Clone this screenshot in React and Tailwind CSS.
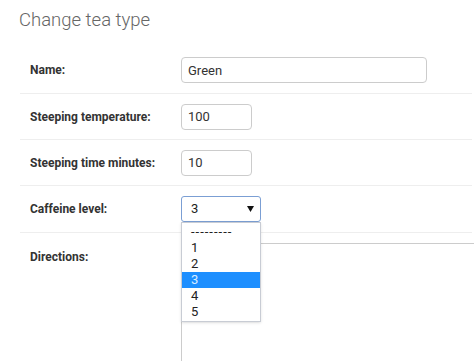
export default function App() {
  const options = ['---------', '1', '2', '3', '4', '5'];

  return (
    <div className="w-[474px] h-[361px] overflow-hidden bg-white font-['Roboto',sans-serif] text-[#333]">
      <h1 className="pl-[19px] pt-[7px] text-[18.5px] font-light leading-[26px] text-[#666]">Change tea type</h1>

      <div className="ml-5 mt-[14px] w-[452px]">
        {/* Name */}
        <div className="flex items-center border-b border-[#eee] pl-[10px] h-[47px]">
          <label className="w-[151px] shrink-0 text-[12px] font-bold text-[#333]">Name:</label>
          <input
            type="text"
            defaultValue="Green"
            className="w-[246px] h-[26px] rounded-[4px] border border-[#ccc] px-[6px] text-[13px] text-[#333] outline-none"
          />
        </div>

        {/* Steeping temperature */}
        <div className="flex items-center border-b border-[#eee] pl-[10px] h-[46px]">
          <label className="w-[151px] shrink-0 text-[12px] font-bold text-[#333]">Steeping temperature:</label>
          <input
            type="text"
            defaultValue="100"
            className="w-[71px] h-[26px] rounded-[4px] border border-[#ccc] px-[6px] text-[13px] text-[#333] outline-none"
          />
        </div>

        {/* Steeping time */}
        <div className="flex items-center border-b border-[#eee] pl-[10px] h-[46px]">
          <label className="w-[151px] shrink-0 text-[12px] font-bold text-[#333]">Steeping time minutes:</label>
          <input
            type="text"
            defaultValue="10"
            className="w-[71px] h-[26px] rounded-[4px] border border-[#ccc] px-[6px] text-[13px] text-[#333] outline-none"
          />
        </div>

        {/* Caffeine level */}
        <div className="relative z-10 flex items-center border-b border-[#eee] pl-[10px] h-[47px]">
          <label className="w-[151px] shrink-0 text-[12px] font-bold text-[#333]">Caffeine level:</label>
          <div className="relative">
            <div className="flex w-[80px] h-[26px] items-center justify-between rounded-[3px] border border-[#7b9fd4] pl-[9px] pr-[6px] text-[13px] text-[#222]">
              <span>3</span>
              <svg width="7" height="6" viewBox="0 0 7 6">
                <path d="M0 0 H7 L3.5 6 Z" fill="#111" />
              </svg>
            </div>
            {/* Open option list */}
            <ul className="absolute left-0 top-[26px] w-[80px] border border-[#c8ccd4] bg-white py-px shadow-sm">
              {options.map((o) => (
                <li
                  key={o}
                  className={`h-4 pl-[9px] text-[13px] leading-4 ${o === '---------' ? 'tracking-[1px]' : ''} ${o === '3' ? 'bg-[#1e8fff] text-[#d8ecff]' : 'text-[#222]'}`}
                >
                  {o}
                </li>
              ))}
            </ul>
          </div>
        </div>

        {/* Directions */}
        <div className="flex items-start pl-[10px] pt-[10px]">
          <label className="w-[151px] shrink-0 pt-[5px] text-[12px] font-bold text-[#333]">Directions:</label>
          <textarea className="w-[600px] h-[200px] shrink-0 rounded-[4px] border border-[#ccc] outline-none" />
        </div>
      </div>
    </div>
  );
}
